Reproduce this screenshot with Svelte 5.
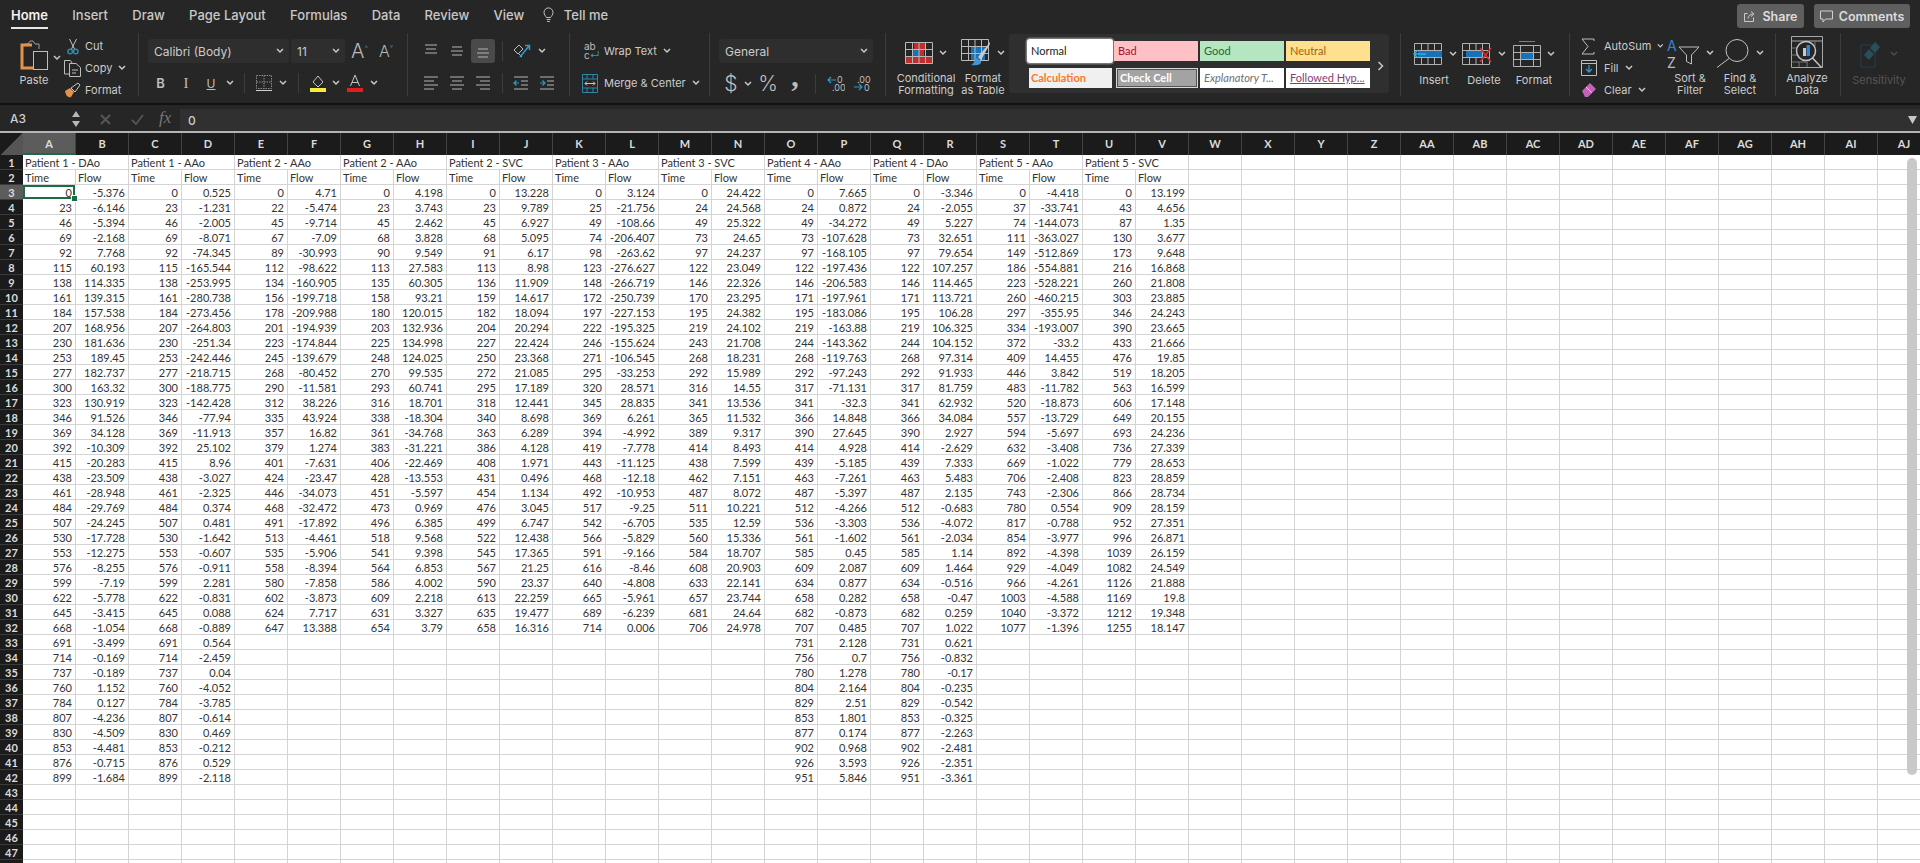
<script>
  const letters = 'ABCDEFGHIJKLMNOPQRSTUVWXYZ'.split('');
  const colNames = [...letters, ...'ABCDEFGHIJ'.split('').map((l) => 'A' + l)];
  const titles = ['Patient 1 - DAo','Patient 1 - AAo','Patient 2 - AAo','Patient 2 - AAo','Patient 2 - SVC','Patient 3 - AAo','Patient 3 - SVC','Patient 4 - AAo','Patient 4 - DAo','Patient 5 - AAo','Patient 5 - SVC'];
  const t1 = '0,23,46,69,92,115,138,161,184,207,230,253,277,300,323,346,369,392,415,438,461,484,507,530,553,576,599,622,645,668,691,714,737,760,784,807,830,853,876,899';
  const t4 = '0,24,49,73,97,122,146,171,195,219,244,268,292,317,341,366,390,414,439,463,487,512,536,561,585,609,634,658,682,707,731,756,780,804,829,853,877,902,926,951';
  const raw = [
    t1,
    '-5.376,-6.146,-5.394,-2.168,7.768,60.193,114.335,139.315,157.538,168.956,181.636,189.45,182.737,163.32,130.919,91.526,34.128,-10.309,-20.283,-23.509,-28.948,-29.769,-24.245,-17.728,-12.275,-8.255,-7.19,-5.778,-3.415,-1.054,-3.499,-0.169,-0.189,1.152,0.127,-4.236,-4.509,-4.481,-0.715,-1.684',
    t1,
    '0.525,-1.231,-2.005,-8.071,-74.345,-165.544,-253.995,-280.738,-273.456,-264.803,-251.34,-242.446,-218.715,-188.775,-142.428,-77.94,-11.913,25.102,8.96,-3.027,-2.325,0.374,0.481,-1.642,-0.607,-0.911,2.281,-0.831,0.088,-0.889,0.564,-2.459,0.04,-4.052,-3.785,-0.614,0.469,-0.212,0.529,-2.118',
    '0,22,45,67,89,112,134,156,178,201,223,245,268,290,312,335,357,379,401,424,446,468,491,513,535,558,580,602,624,647',
    '4.71,-5.474,-9.714,-7.09,-30.993,-98.622,-160.905,-199.718,-209.988,-194.939,-174.844,-139.679,-80.452,-11.581,38.226,43.924,16.82,1.274,-7.631,-23.47,-34.073,-32.472,-17.892,-4.461,-5.906,-8.394,-7.858,-3.873,7.717,13.388',
    '0,23,45,68,90,113,135,158,180,203,225,248,270,293,316,338,361,383,406,428,451,473,496,518,541,564,586,609,631,654',
    '4.198,3.743,2.462,3.828,9.549,27.583,60.305,93.21,120.015,132.936,134.998,124.025,99.535,60.741,18.701,-18.304,-34.768,-31.221,-22.469,-13.553,-5.597,0.969,6.385,9.568,9.398,6.853,4.002,2.218,3.327,3.79',
    '0,23,45,68,91,113,136,159,182,204,227,250,272,295,318,340,363,386,408,431,454,476,499,522,545,567,590,613,635,658',
    '13.228,9.789,6.927,5.095,6.17,8.98,11.909,14.617,18.094,20.294,22.424,23.368,21.085,17.189,12.441,8.698,6.289,4.128,1.971,0.496,1.134,3.045,6.747,12.438,17.365,21.25,23.37,22.259,19.477,16.316',
    '0,25,49,74,98,123,148,172,197,222,246,271,295,320,345,369,394,419,443,468,492,517,542,566,591,616,640,665,689,714',
    '3.124,-21.756,-108.66,-206.407,-263.62,-276.627,-266.719,-250.739,-227.153,-195.325,-155.624,-106.545,-33.253,28.571,28.835,6.261,-4.992,-7.778,-11.125,-12.18,-10.953,-9.25,-6.705,-5.829,-9.166,-8.46,-4.808,-5.961,-6.239,0.006',
    '0,24,49,73,97,122,146,170,195,219,243,268,292,316,341,365,389,414,438,462,487,511,535,560,584,608,633,657,681,706',
    '24.422,24.568,25.322,24.65,24.237,23.049,22.326,23.295,24.382,24.102,21.708,18.231,15.989,14.55,13.536,11.532,9.317,8.493,7.599,7.151,8.072,10.221,12.59,15.336,18.707,20.903,22.141,23.744,24.64,24.978',
    t4,
    '7.665,0.872,-34.272,-107.628,-168.105,-197.436,-206.583,-197.961,-183.086,-163.88,-143.362,-119.763,-97.243,-71.131,-32.3,14.848,27.645,4.928,-5.185,-7.261,-5.397,-4.266,-3.303,-1.602,0.45,2.087,0.877,0.282,-0.873,0.485,2.128,0.7,1.278,2.164,2.51,1.801,0.174,0.968,3.593,5.846',
    t4,
    '-3.346,-2.055,5.227,32.651,79.654,107.257,114.465,113.721,106.28,106.325,104.152,97.314,91.933,81.759,62.932,34.084,2.927,-2.629,7.333,5.483,2.135,-0.683,-4.072,-2.034,1.14,1.464,-0.516,-0.47,0.259,1.022,0.621,-0.832,-0.17,-0.235,-0.542,-0.325,-2.263,-2.481,-2.351,-3.361',
    '0,37,74,111,149,186,223,260,297,334,372,409,446,483,520,557,594,632,669,706,743,780,817,854,892,929,966,1003,1040,1077',
    '-4.418,-33.741,-144.073,-363.027,-512.869,-554.881,-528.221,-460.215,-355.95,-193.007,-33.2,14.455,3.842,-11.782,-18.873,-13.729,-5.697,-3.408,-1.022,-2.408,-2.306,0.554,-0.788,-3.977,-4.398,-4.049,-4.261,-4.588,-3.372,-1.396',
    '0,43,87,130,173,216,260,303,346,390,433,476,519,563,606,649,693,736,779,823,866,909,952,996,1039,1082,1126,1169,1212,1255',
    '13.199,4.656,1.35,3.677,9.648,16.868,21.808,23.885,24.243,23.665,21.666,19.85,18.205,16.599,17.148,20.155,24.236,27.339,28.653,28.859,28.734,28.159,27.351,26.871,26.159,24.549,21.888,19.8,19.348,18.147'
  ];
  const cols = raw.map((s) => s.split(','));
  const value = (r, c) => (cols[c] ? cols[c][r - 3] ?? '' : '');
  const rows = Array.from({ length: 46 }, (_, i) => i + 3);
  const colIdx = colNames.map((_, i) => i);
  const tabs = ['Home','Insert','Draw','Page Layout','Formulas','Data','Review','View'];
</script>

{#snippet chev()}
  <svg class="chev" width="8" height="6" viewBox="0 0 8 6"><path d="M1 1l3 3 3-3" fill="none" stroke="#c8c8c8" stroke-width="1.5"/></svg>
{/snippet}

{#snippet hlines(d)}
  <svg width="16" height="18" viewBox="0 0 16 18"><path {d} fill="none" stroke="#b4b4b4" stroke-width="1.2"/></svg>
{/snippet}

<div class="app">
  <header class="topbar">
    <nav class="tabs">
      {#each tabs as t, i}
        <span class="tab" class:on={i === 0}>{t}</span>
      {/each}
      <svg class="bulb" width="11" height="16" viewBox="0 0 11 16"><path d="M3.4 10.5C2.6 8.8 1 8 1 5.4a4.5 4.5 0 0 1 9 0c0 2.600-1.600 3.400-2.400 5.100zM3.600 12.500h3.800M4.200 14.500h2.600" fill="none" stroke="#c4c4c4" stroke-width="1"/></svg>
      <span class="tab tell">Tell me</span>
    </nav>
    <div class="actions">
      <button class="btn share">
        <svg width="13" height="13" viewBox="0 0 13 13"><path d="M10.500 7.500v4h-9v-8h3M5 8.500c.5-3 2.500-4.500 5-4.500M8 1.500L11 4 8 6.500" fill="none" stroke="#c8c8c8"/></svg>
        Share
      </button>
      <button class="btn comments">
        <svg width="13" height="13" viewBox="0 0 13 13"><path d="M.5 1h12v8H5.500L3 12V9H.5z" fill="none" stroke="#d0d0d0"/></svg>
        Comments
      </button>
    </div>
  </header>

  <section class="ribbon">
    <div class="grp g1">
      <div class="big paste">
        <div class="bigic">
          <svg width="29" height="32" viewBox="0 0 29 32"><path d="M12 7H2v23h11" fill="none" stroke="#e3924b" stroke-width="3"/><path d="M5 6h3l2-3h3l2 3h4v5" fill="none" stroke="#9c9c9c"/><rect x="13.500" y="13.500" width="14" height="18" fill="#252525" stroke="#bdbdbd"/></svg>
        </div>
        <div class="lb">Paste</div>
      </div>
      <div class="pastechev">{@render chev()}</div>
      <div class="small">
        <div class="srow"><span class="sic"><svg width="12" height="17" viewBox="0 0 12 17"><path d="M2.500 1l5 10M9.500 1l-5 10" stroke="#c4c4c4" fill="none"/><circle cx="3.200" cy="13.500" r="2.300" fill="none" stroke="#2f86a8" stroke-width="1.500"/><circle cx="8.800" cy="13.500" r="2.300" fill="none" stroke="#2f86a8" stroke-width="1.500"/></svg></span>Cut</div>
        <div class="srow"><span class="sic"><svg width="17" height="17" viewBox="0 0 17 17"><path d="M5 14H.5V.5h6L8 3" fill="none" stroke="#bdbdbd"/><path d="M5.500 3.500H12l4.500 4v9h-11zM8 10h6M8 13h4" fill="none" stroke="#bdbdbd"/></svg></span>Copy{@render chev()}</div>
        <div class="srow"><span class="sic"><svg width="17" height="16" viewBox="0 0 17 16"><path d="M1 9l5-3 4 4-3 5c-3 1-5-1-6-6z" fill="#e3924b"/><path d="M7 6l7-5 2 2-5 7z" fill="none" stroke="#c8c8c8"/></svg></span>Format</div>
      </div>
    </div>

    <div class="grp g2">
      <div class="fontrow1">
        <div class="combo fontname"><span>Calibri (Body)</span>{@render chev()}</div>
        <div class="combo fontsize"><span>11</span>{@render chev()}</div>
        <span class="grow">A<sup>^</sup></span>
        <span class="shrink">A<sup>˅</sup></span>
      </div>
      <div class="fontrow2">
        <b class="fb">B</b>
        <i class="fi">I</i>
        <u class="fu">U</u>
        {@render chev()}
        <span class="vsep"></span>
        <svg width="16" height="16" viewBox="0 0 16 16"><path d="M.5.500h15v13H.5zM8 .500v13M.5 7h15" fill="none" stroke="#8a8a8a" stroke-dasharray="1.500 1"/><path d="M0 15.500h16" stroke="#d0d0d0"/></svg>
        {@render chev()}
        <span class="vsep"></span>
        <svg width="16" height="17" viewBox="0 0 16 17"><path d="M8 1l5 6-5 5-5-5z" fill="none" stroke="#c4c4c4"/><rect y="13" width="16" height="4" fill="#f4ec3c"/></svg>
        {@render chev()}
        <svg width="16" height="18" viewBox="0 0 16 18"><path d="M3.500 12L8 1l4.500 11M5 8.500h6" fill="none" stroke="#c4c4c4"/><rect y="14" width="16" height="4" fill="#e01e1e"/></svg>
        {@render chev()}
      </div>
    </div>

    <div class="grp g3">
      <div class="alrow">
        <span class="al">{@render hlines('M2 3h12M3 7h10M2 11h12')}</span>
        <span class="al">{@render hlines('M3 5h10M2 9h12M3 13h10')}</span>
        <span class="al act">{@render hlines('M3 7h10M2 11h12M3 15h10')}</span>
        <span class="vsep"></span>
        <span class="al"><svg width="20" height="18" viewBox="0 0 20 18"><path d="M2 8l5-5 4 4-5 5zM7 12l3 3" fill="none" stroke="#bdbdbd"/><path d="M8 15L17 4M13 3.500h4.500V8" fill="none" stroke="#2f9ac8" stroke-width="1.500"/></svg></span>
        {@render chev()}
      </div>
      <div class="alrow two">
        <span class="al">{@render hlines('M1 3h14M1 7h10M1 11h14M1 15h10')}</span>
        <span class="al">{@render hlines('M1 3h14M3 7h10M1 11h14M3 15h10')}</span>
        <span class="al">{@render hlines('M1 3h14M5 7h10M1 11h14M5 15h10')}</span>
        <span class="vsep"></span>
        <span class="al"><svg width="16" height="18" viewBox="0 0 16 18"><path d="M1 3h14M8 7h7M8 11h7M1 15h14" fill="none" stroke="#b4b4b4"/><path d="M6 9H1M3.500 6.500L1 9l2.500 2.500" fill="none" stroke="#2f9ac8" stroke-width="1.200"/></svg></span>
        <span class="al"><svg width="16" height="18" viewBox="0 0 16 18"><path d="M1 3h14M8 7h7M8 11h7M1 15h14" fill="none" stroke="#b4b4b4"/><path d="M1 9h5M3.500 6.500L6 9l-2.500 2.500" fill="none" stroke="#2f9ac8" stroke-width="1.200"/></svg></span>
      </div>
    </div>

    <div class="grp g4">
      <div class="wrow"><span class="wic abc"><span>ab</span><span>c<em>↵</em></span></span>Wrap Text{@render chev()}</div>
      <div class="wrow merge"><span class="wic"><svg width="16" height="19" viewBox="0 0 16 19"><path d="M.5.500h15v18H.5zM.5 5h15M.5 14h15M5 1v4M11 1v4M5 14v5M11 14v5" fill="none" stroke="#2f86a8"/><path d="M3 9.500h10M5 7.500l-2 2 2 2M11 7.500l2 2-2 2" fill="none" stroke="#c8c8c8"/></svg></span>Merge &amp; Center{@render chev()}</div>
    </div>

    <div class="grp g5">
      <div class="combo general"><span>General</span>{@render chev()}</div>
      <div class="numrow">
        <span class="dollar">$</span>
        {@render chev()}
        <span class="pct">%</span>
        <span class="comma">,</span>
        <span class="vsep"></span>
        <svg width="18" height="17" viewBox="0 0 18 17"><path d="M9 5H1M4 2L1 5l3 3" fill="none" stroke="#2f9ac8" stroke-width="1.200"/><text x="10" y="8" class="mini">0</text><text x="5" y="16" class="mini">.00</text></svg>
        <svg width="18" height="17" viewBox="0 0 18 17"><text x="4" y="8" class="mini">.00</text><path d="M1 12h8M6 9l3 3-3 3" fill="none" stroke="#2f9ac8" stroke-width="1.200"/><text x="11" y="16" class="mini">0</text></svg>
      </div>
    </div>

    <div class="grp g6">
      <div class="big cond">
        <div class="bigic">
          <svg width="28" height="22" viewBox="0 0 28 22"><path d="M9 1h11v6H9zM11 8h8v6h-8z" fill="#c02f2f"/><path d="M1 15h26v6H1z" fill="#c02f2f"/><path d="M7 8h8v6H7z" fill="#1772b8"/><path d="M.5.500h27v21H.5zM.5 7.500h27M.5 14.500h27M7.500.500v21M14 .500v21M20.500.500v21" fill="none" stroke="#b8b8b8"/></svg>
          {@render chev()}
        </div>
        <div class="lb">Conditional</div><div class="lb">Formatting</div>
      </div>
      <div class="big fat">
        <div class="bigic">
          <svg width="30" height="28" viewBox="0 0 30 28"><path d="M10 8h14v14H10z" fill="#1772b8"/><path d="M.5.500h27v21H.5zM.5 7.500h27M.5 14.500h27M7.500.500v21M14 .500v21M20.500.500v21" fill="none" stroke="#b8b8b8"/><path d="M29 3L17 18l3 3L29 5z" fill="#c8c8c8"/><path d="M16 19c-3 1-2 5-6 7 5 1 11 0 10-4z" fill="#3e96d8"/></svg>
          {@render chev()}
        </div>
        <div class="lb">Format</div><div class="lb">as Table</div>
      </div>
      <div class="gallery">
        <div class="stylegrid">
          <div class="st normal">Normal</div>
          <div class="st bad">Bad</div>
          <div class="st good">Good</div>
          <div class="st neutral">Neutral</div>
          <div class="st calc">Calculation</div>
          <div class="st check">Check Cell</div>
          <div class="st expl">Explanatory T...</div>
          <div class="st follow">Followed Hyp...</div>
        </div>
        <svg class="more" width="7" height="10" viewBox="0 0 7 10"><path d="M1.500 1l4 4-4 4" fill="none" stroke="#c8c8c8" stroke-width="1.500"/></svg>
      </div>
    </div>

    <div class="grp g7">
      <div class="big cellb">
        <div class="bigic">
          <svg width="31" height="22" viewBox="0 0 31 22"><path d="M2.500.500h27v21h-27zM2.500 7.500h27M2.500 14.500h27M9.500.500v21M16 .500v21M22.500.500v21" fill="none" stroke="#b0b0b0"/><path d="M6 8h24v6H6z" fill="#1772b8"/><path d="M14 11H2M6 7l-4 4 4 4" fill="none" stroke="#2fb0e0" stroke-width="1.500"/></svg>
          {@render chev()}
        </div>
        <div class="lb">Insert</div>
      </div>
      <div class="big cellb">
        <div class="bigic">
          <svg width="30" height="22" viewBox="0 0 30 22"><path d="M.5.500h27v21H.5zM.5 7.500h27M.5 14.500h27M7.500.500v21M14 .500v21M20.500.500v21" fill="none" stroke="#b0b0b0"/><path d="M4 8h16v6H4z" fill="#1772b8"/><path d="M18 5l11 14M29 5L18 19" fill="none" stroke="#d03030" stroke-width="1.500"/></svg>
          {@render chev()}
        </div>
        <div class="lb">Delete</div>
      </div>
      <div class="big cellb">
        <div class="bigic">
          <svg width="28" height="26" viewBox="0 0 28 26"><path d="M6 .500h16" stroke="#2f9ac8" stroke-width="1"/><path d="M8 11h12v8H8z" fill="#1772b8"/><path d="M.5 4.500h27v21H.5zM.5 11.500h27M.5 18.500h27M7.500 4.500v21M20.500 4.500v21" fill="none" stroke="#b0b0b0"/></svg>
          {@render chev()}
        </div>
        <div class="lb">Format</div>
      </div>
    </div>

    <div class="grp g8">
      <div class="small edit">
        <div class="srow"><span class="sic e"><svg width="14" height="17" viewBox="0 0 14 17"><path d="M13 3V1H1l6 7.500L1 16h12v-2" fill="none" stroke="#bdbdbd"/></svg></span>AutoSum{@render chev()}</div>
        <div class="srow"><span class="sic e"><svg width="16" height="16" viewBox="0 0 16 16"><path d="M.5.500h15v15H.5z" fill="none" stroke="#bdbdbd"/><path d="M.5 3.500h15" stroke="#bdbdbd"/><path d="M8 5v7M5 9l3 3 3-3" fill="none" stroke="#2f9ac8" stroke-width="1.300"/></svg></span>Fill{@render chev()}</div>
        <div class="srow"><span class="sic e"><svg width="16" height="16" viewBox="0 0 16 16"><path d="M1 9l8-8 6 6-8 8H4z" fill="#c462b8"/><path d="M5 5l6 6" stroke="#e8d0e4"/></svg></span>Clear{@render chev()}</div>
      </div>
      <div class="big sort">
        <div class="bigic">
          <svg width="33" height="34" viewBox="0 0 33 34"><text x="0" y="15" class="az blue">A</text><text x="0" y="32" class="az">Z</text><path d="M12 11h20l-7.500 8v9l-5-2.500V19z" fill="none" stroke="#bdbdbd"/></svg>
          {@render chev()}
        </div>
        <div class="lb">Sort &amp;</div><div class="lb">Filter</div>
      </div>
      <div class="big find">
        <div class="bigic">
          <svg width="34" height="30" viewBox="0 0 34 30"><circle cx="21" cy="12.500" r="11" fill="none" stroke="#c4c4c4"/><path d="M13 20.500L1 29.500" fill="none" stroke="#c4c4c4"/></svg>
          {@render chev()}
        </div>
        <div class="lb">Find &amp;</div><div class="lb">Select</div>
      </div>
    </div>

    <div class="grp g9">
      <div class="big analyze">
        <div class="bigic">
          <svg width="32" height="33" viewBox="0 0 32 33"><path d="M.5.500h31v31H.5zM.5 5h31" fill="none" stroke="#a8a8a8"/><path d="M.5 12h6M.5 19h6M.5 26h16M8 26v5M16 26v5M24 5v5" fill="none" stroke="#777"/><circle cx="15" cy="15" r="9.500" fill="#252525" stroke="#c4c4c4" stroke-width="1.500"/><path d="M12 12h3v8h-3z" fill="#c8c8c8"/><path d="M15.500 9h3.500v11h-3.500z" fill="#2f86d8"/><path d="M21.500 22l9 9.500" stroke="#c4c4c4" stroke-width="1.500"/></svg>
        </div>
        <div class="lb">Analyze</div><div class="lb">Data</div>
      </div>
    </div>

    <div class="grp g10">
      <div class="big sens">
        <div class="bigic">
          <svg width="24" height="28" viewBox="0 0 24 28"><path d="M1 5h14v22H1z" fill="none" stroke="#1f3f4a"/><path d="M4 15l5-6 5 5-5 6zM10 8l5-6 5 5-5 6z" fill="#28505c"/></svg>
          <svg class="chev" width="8" height="6" viewBox="0 0 8 6"><path d="M1 1l3 3 3-3" fill="none" stroke="#4c4c4c" stroke-width="1.500"/></svg>
        </div>
        <div class="lb">Sensitivity</div>
      </div>
    </div>
  </section>

  <section class="formula">
    <span class="name">A3</span>
    <svg class="step" width="8" height="16" viewBox="0 0 8 16"><path d="M4 0l4 6H0zM4 16l4-6H0z" fill="#b8b8b8"/></svg>
    <svg class="fx-x" width="11" height="11" viewBox="0 0 11 11"><path d="M1 1l9 9M10 1l-9 9" stroke="#565656" stroke-width="2"/></svg>
    <svg class="fx-c" width="13" height="11" viewBox="0 0 13 11"><path d="M1 6l4 4 7-9" fill="none" stroke="#565656" stroke-width="1.800"/></svg>
    <i class="fx">fx</i>
    <div class="field"><span>0</span><svg width="9" height="8" viewBox="0 0 9 8"><path d="M0 0h9L4.500 8z" fill="#c8c8c8"/></svg></div>
  </section>

  <section class="sheet">
    <div class="corner"></div>
    {#each colNames as n, i}
      <div class="colh" class:sel={i === 0}>{n}</div>
    {/each}

    <div class="rowh">1</div>
    {#each titles as t}
      <div class="cell title">{t}</div>
    {/each}
    {#each colIdx.slice(22) as _}
      <div class="cell"></div>
    {/each}

    <div class="rowh">2</div>
    {#each colIdx as c}
      <div class="cell">{c < 22 ? (c % 2 ? 'Flow' : 'Time') : ''}</div>
    {/each}

    {#each rows as r}
      <div class="rowh" class:sel={r === 3}>{r}</div>
      {#each colIdx as c}
        <div class="cell num" class:active={r === 3 && c === 0}>{value(r, c)}</div>
      {/each}
    {/each}
    <div class="vbar"></div>
  </section>
</div>

<style>
  :global(body) { margin: 0; background: #262626; overflow: hidden; }
  .app {
    width: 1920px; height: 863px; overflow: hidden;
    display: flex; flex-direction: column;
    background: #262626; color: #cccccc;
    font-family: Inter, "Liberation Sans", sans-serif; font-size: 11px;
  }
  .topbar { height: 33px; flex: none; display: flex; justify-content: space-between; padding: 0 10px 0 11px; }
  .tabs { display: flex; gap: 24.3px; align-items: flex-start; }
  .tab { height: 27px; line-height: 30px; font-size: 13px; font-weight: 500; color: #c8c8c8; box-sizing: content-box; }
  .tab.on { color: #f2f2f2; font-weight: 600; border-bottom: 2px solid #e8e8e8; }
  .bulb { margin: 7px -15px 0 -5px; }
  .actions { display: flex; gap: 10px; padding-top: 4px; }
  .btn {
    height: 24px; border: 0; border-radius: 3px; background: #5f5f5f; color: #dcdcdc;
    font: 600 12.5px Inter, sans-serif; display: flex; align-items: center; justify-content: center; gap: 6px; padding: 0;
  }
  .share { width: 67px; }
  .comments { width: 96px; }

  .ribbon { height: 70px; flex: none; display: flex; border-bottom: 2px solid #111; box-sizing: content-box; }
  .grp { height: 63px; flex: none; box-sizing: border-box; border-right: 1px solid #3c3c3c; display: flex; }
  .g1 { width: 139px; }
  .g2 { width: 269px; flex-direction: column; padding: 6px 0 0 9px; gap: 8px; }
  .g3 { width: 162px; flex-direction: column; padding: 6px 0 0 10px; gap: 8px; }
  .g4 { width: 140px; flex-direction: column; padding: 6px 0 0 12px; gap: 8px; }
  .g5 { width: 176px; flex-direction: column; padding: 6px 0 0 9px; gap: 8px; }
  .g6 { width: 515px; padding-left: 8px; }
  .g7 { width: 169px; padding-left: 8px; }
  .g8 { width: 206px; padding-left: 11px; }
  .g9 { width: 65px; }
  .g10 { border-right: 0; padding-left: 3px; color: #555; }

  .big { display: flex; flex-direction: column; align-items: center; flex: none; }
  .bigic { height: 41px; display: flex; align-items: center; justify-content: center; gap: 6px; }
  .lb { line-height: 12px; height: 12px; font-size: 11px; white-space: nowrap; }
  .paste { width: 34px; margin-left: 17px; }
  .pastechev { width: 12px; padding-top: 17px; text-align: center; }
  .small { margin-left: 0; padding-top: 2px; flex: none; }
  .srow { height: 22px; display: flex; align-items: center; font-size: 11px; white-space: nowrap; }
  .sic { width: 22px; display: flex; justify-content: center; flex: none; padding-right: 3px; box-sizing: border-box; }
  .sic.e { width: 23px; justify-content: flex-start; padding: 0; }
  .srow .chev { margin-left: 6px; }
  .edit { width: 83px; }

  .combo {
    height: 24px; box-sizing: border-box; background: #2e2e2e; border-radius: 3px;
    display: flex; align-items: center; justify-content: space-between; padding: 0 5px 0 6px;
    font-size: 12px; flex: none;
  }
  .fontrow1 { display: flex; align-items: center; height: 24px; }
  .fontname { width: 141px; margin-right: 2px; }
  .fontsize { width: 54px; }
  .grow { width: 30px; margin-left: 6px; font: 300 20px Inter, sans-serif; color: #b8b8b8; }
  .shrink { width: 26px; margin-left: -2px; font: 300 16px Inter, sans-serif; color: #b8b8b8; }
  sup { color: #2f9ac8; font-size: 8px; vertical-align: 7px; line-height: 0; }
  .fontrow2 {
    display: grid; height: 24px; align-items: center; justify-items: center;
    grid-template-columns: 25px 26px 24px 14px 14px 25px 14px 16px 24px 12px 26px 12px;
  }
  .fb, .fi, .fu { font: 15px "Liberation Serif", serif; color: #bdbdbd; }
  .fb { font: 600 13px Inter, sans-serif; }
  .fu { font-family: Inter, sans-serif; font-size: 12px; }
  .vsep { width: 1px; height: 20px; background: #3c3c3c; display: block; }

  .alrow {
    display: grid; height: 24px; align-items: center; justify-items: center;
    grid-template-columns: 26px 26px 26px 12px 28px 12px;
  }
  .alrow.two { grid-template-columns: 26px 26px 26px 12px 26px 26px; }
  .al { display: flex; align-items: center; justify-content: center; width: 24px; height: 24px; border-radius: 3px; }
  .al.act { background: #4a4a4a; }

  .wrow { height: 24px; display: flex; align-items: center; white-space: nowrap; font-size: 11px; }
  .wrow .chev { margin-left: 6px; }
  .wic { width: 22px; flex: none; display: flex; }
  .abc { flex-direction: column; font-size: 10px; line-height: 9px; color: #bdbdbd; padding-left: 2px; box-sizing: border-box; }
  .abc em { color: #2f9ac8; font-style: normal; }

  .general { width: 154px; }
  .numrow {
    display: grid; height: 24px; align-items: center; justify-items: center;
    grid-template-columns: 24px 10px 30px 24px 16px 26px 26px;
    color: #bdbdbd;
  }
  .dollar { font: 300 21px Inter, sans-serif; }
  .pct { font: 300 21px Inter, sans-serif; }
  .comma { font: 700 30px/10px "Liberation Serif", serif; transform: translateY(-8px); }
  .mini { font: 9px Inter, sans-serif; fill: #bdbdbd; }

  .cond { width: 64px; }
  .fat { width: 50px; margin-right: 1px; }
  .gallery {
    width: 380px; height: 59px; margin-top: 1px; flex: none; background: #2f2f2f; border-radius: 2px;
    display: flex; padding: 7px 0 0 18px; box-sizing: border-box;
  }
  .stylegrid { display: grid; grid-template-columns: 87px 86px 86px 84px; grid-template-rows: 20px 20px; row-gap: 7px; flex: none; }
  .st { font: 11px Lato, sans-serif; line-height: 20px; padding-left: 4px; white-space: nowrap; overflow: hidden; margin-right: 2px; }
  .normal { background: #fff; color: #222; margin: -2px 1px -2px 0; line-height: 24px; box-shadow: 0 0 0 1.5px #777; border-radius: 3px; font-size: 11px; }
  .bad { background: #ffc0c6; color: #a3122a; }
  .good { background: #b4e6c2; color: #1b6b30; }
  .neutral { background: #ffe08f; color: #a06010; margin-right: 0; }
  .calc { background: #f0f0f0; color: #f97a2a; margin: 0 2px; font-weight: 700; padding-left: 2px; }
  .check { background: #a3a3a3; color: #fff; font-weight: 700; margin-left: 2px; box-shadow: inset 0 0 0 1px #d8d8d8, inset 0 0 0 2px #555; }
  .expl { background: #fff; color: #707070; font-style: italic; }
  .follow { background: #fff; color: #8a3a72; text-decoration: underline; margin-right: 0; }
  .more { margin: 20px 0 0 7px; }

  .cellb { width: 50px; }
  .sort { width: 52px; }
  .find { width: 48px; }
  .analyze { width: 62px; }
  .sens { width: 70px; }
  .az { font: 14px Inter, sans-serif; fill: #bdbdbd; }
  .az.blue { fill: #2f86d8; }

  .formula { height: 26px; flex: none; display: flex; align-items: center; position: relative; background: #262626; }
  .name { width: 72px; padding-left: 10px; box-sizing: border-box; font-size: 12px; font-weight: 500; }
  .step { margin-right: 20px; margin-top: 2px; }
  .fx-x { margin-right: 20px; margin-top: 2px; }
  .fx-c { margin-right: 15px; margin-top: 2px; }
  .fx { font: italic 17px "Liberation Serif", serif; color: #777; width: 21px; }
  .field {
    flex: 1; height: 22px; align-self: flex-end; background: #303030; display: flex; align-items: center;
    justify-content: space-between; padding: 0 3px 0 8px; font-size: 12px; font-weight: 500;
  }

  .sheet {
    height: 732px; flex: none; overflow: hidden; position: relative; background: #fff;
    border-top: 2px solid #b4b4b4; box-sizing: border-box;
    display: grid; grid-template-columns: 23px repeat(36, 53px); grid-template-rows: 22px; grid-auto-rows: 15px;
    font: 11px Lato, "Liberation Sans", sans-serif; color: #333;
  }
  .corner { background: linear-gradient(135deg, #1b1b1b 50%, #555 50%); }
  .colh {
    background: #1b1b1b; color: #dcdcdc; font-weight: 700; text-align: center; line-height: 22px;
    border-right: 1px solid #444; box-sizing: border-box;
  }
  .colh.sel { background: #5c5c5c; border-bottom: 2px solid #1d6b45; }
  .rowh {
    background: #1b1b1b; color: #dcdcdc; font-weight: 700; text-align: center; line-height: 15px;
    border-bottom: 1px solid #3a3a3a; box-sizing: border-box;
  }
  .rowh.sel { background: #5c5c5c; }
  .cell {
    border-right: 1px solid #d4d4d4; border-bottom: 1px solid #d4d4d4; box-sizing: border-box;
    line-height: 15px; padding: 0 3px 0 2px; white-space: nowrap; overflow: hidden;
  }
  .title { grid-column: span 2; }
  .num { text-align: right; }
  .active { position: relative; overflow: visible; box-shadow: inset 0 0 0 2px #1d6b45; border-color: transparent; }
  .active::after {
    content: ""; position: absolute; right: -3px; bottom: -3px; width: 5px; height: 5px;
    background: #1d6b45; border: 1px solid #fff;
  }
  .vbar { position: absolute; top: 25px; right: 3px; width: 10px; height: 617px; background: #c9c9c9; border-radius: 5px; }
</style>
